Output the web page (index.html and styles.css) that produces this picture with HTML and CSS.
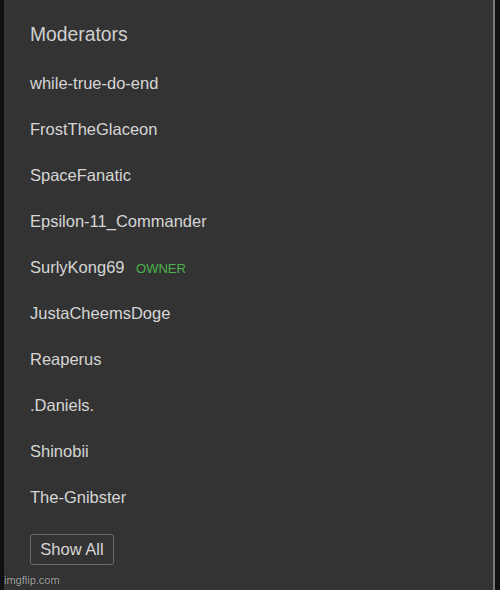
FILE: index.html
```html
<!DOCTYPE html>
<html>
<head>
<meta charset="utf-8">
<link rel="stylesheet" href="styles.css">
</head>
<body>
<div class="panel">
  <h2 class="title">Moderators</h2>
  <ul class="mods">
    <li>while-true-do-end</li>
    <li>FrostTheGlaceon</li>
    <li>SpaceFanatic</li>
    <li>Epsilon-11_Commander</li>
    <li>SurlyKong69 <span class="owner">OWNER</span></li>
    <li>JustaCheemsDoge</li>
    <li>Reaperus</li>
    <li>.Daniels.</li>
    <li>Shinobii</li>
    <li>The-Gnibster</li>
  </ul>
  <button class="show-all">Show All</button>
</div>
<div class="watermark">imgflip.com</div>
</body>
</html>
```
FILE: styles.css
```css
html, body {
  margin: 0;
  padding: 0;
  background: #101010;
  height: 590px;
  overflow: hidden;
}
body {
  font-family: "Liberation Sans", Arial, sans-serif;
  color: #d6d6d6;
  position: relative;
}
.panel {
  margin-left: 4px;
  width: 491px;
  height: 590px;
  box-sizing: border-box;
  background: #333333;
  border-right: 2px solid #7a7a7a;
  padding: 19.5px 0 0 26px;
}
.title {
  margin: 0;
  font-weight: normal;
  font-size: 19.3px;
  line-height: 30px;
  color: #d0d0d0;
}
.mods {
  list-style: none;
  margin: 10px 0 0 0;
  padding: 0;
}
.mods li {
  font-size: 16.5px;
  line-height: 46px;
  height: 46px;
}
.owner {
  color: #4cb34c;
  font-size: 13px;
  margin-left: 7px;
}
.show-all {
  margin-top: 14.5px;
  font-family: "Liberation Sans", Arial, sans-serif;
  font-size: 16.5px;
  line-height: 19px;
  color: #d6d6d6;
  background: #333333;
  border: 1px solid #6a6a6a;
  border-radius: 3px;
  padding: 5px 6px;
  width: 84px;
  box-sizing: border-box;
  height: 31px;
}
.watermark {
  position: absolute;
  left: 4px;
  top: 574px;
  font-size: 11px;
  color: #a8a8a8;
  text-shadow: 0 0 1px #000;
}
```
